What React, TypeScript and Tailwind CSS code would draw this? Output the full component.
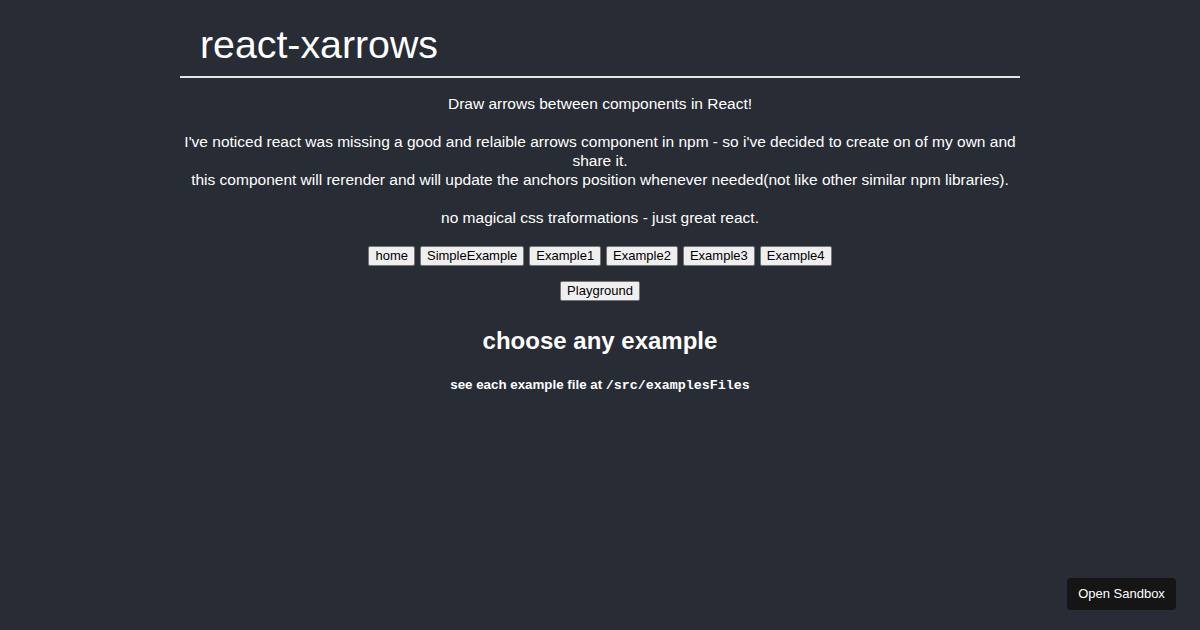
const links = ["home", "SimpleExample", "Example1", "Example2", "Example3", "Example4"]

export default function App() {
  return (
    <div className="min-h-[630px] bg-[#282c34] text-white font-['Liberation_Sans',Arial,sans-serif] relative">
      <div className="w-[840px] mx-auto">
        <div className="pt-[21px] pb-[8px] px-5 border-b-2 border-[#e6e6e6]">
          <h1 className="text-[39.3px] leading-[47px]">react-xarrows</h1>
        </div>
        <div className="text-center text-[15.5px] leading-[19px] pt-[16px]">
          Draw arrows between components in React!
          <br />
          <br />
          I've noticed react was missing a good and relaible arrows component in npm - so i've decided to create on of my own and share it.
          <br />
          this component will rerender and will update the anchors position whenever needed(not like other similar npm libraries).
          <br />
          <br />
          no magical css traformations - just great react.
        </div>
        <div className="flex justify-center gap-[5px] mt-[19px]">
          {links.map((l) => (
            <button
              key={l}
              className="bg-[#efefef] text-black text-[13px] leading-[16px] px-[6px] py-[1px] border border-[#767676] rounded-[2px] h-[20px]"
            >
              {l}
            </button>
          ))}
        </div>
        <div className="flex justify-center mt-[15px]">
          <button className="bg-[#efefef] text-black text-[13px] leading-[16px] px-[6px] py-[1px] border border-[#767676] rounded-[2px] h-[20px]">
            Playground
          </button>
        </div>
        <h2 className="text-center text-[24px] font-bold mt-[26px] leading-[28px]">choose any example</h2>
        <p className="text-center text-[13.33px] font-bold mt-[20px]">
          see each example file at <code className="font-['Liberation_Mono',monospace]">/src/examplesFiles</code>
        </p>
      </div>
      <button className="absolute right-[24px] bottom-[20px] bg-[#151515] text-white text-[13px] whitespace-nowrap rounded-[4px] h-[32px] w-[109px]">
        Open Sandbox
      </button>
    </div>
  )
}
